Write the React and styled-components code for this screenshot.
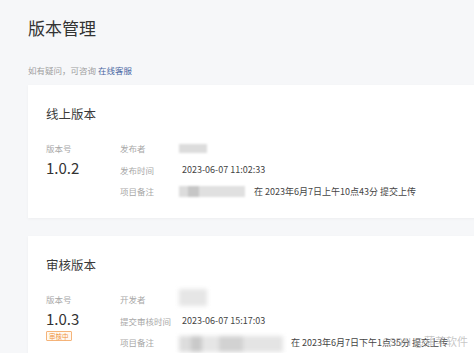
import React from "react";
import styled, { createGlobalStyle, css } from "styled-components";

const GlobalStyle = createGlobalStyle`
  html, body {
    margin: 0;
    padding: 0;
    background: #f6f7f9;
    overflow: hidden;
  }
  body {
    font-family: "Noto Sans CJK SC", "Noto Sans", sans-serif;
    color: #333;
  }
`;

const Page = styled.div`
  position: relative;
  width: 474px;
  height: 353px;
  padding: 17px 0 0 28px;
  box-sizing: border-box;
  overflow: hidden;
`;

const Title = styled.h1`
  margin: 0;
  font-size: 17px;
  font-weight: 400;
  line-height: 22px;
  color: #333;
`;

const Hint = styled.p`
  margin: 25px 0 0;
  font-size: 8.5px;
  line-height: 12px;
  color: #a0a0a0;

  a {
    color: #4a67a3;
    text-decoration: none;
  }
`;

const Card = styled.section`
  background: #fff;
  margin-top: ${({ $gap }) => $gap}px;
  margin-right: -60px;
  padding: 20px 0 ${({ $bottom }) => $bottom}px 18px;
  box-shadow: 0 1px 3px rgba(0, 0, 0, 0.04);
`;

const CardTitle = styled.h2`
  margin: 0;
  font-size: 12.5px;
  font-weight: 400;
  line-height: 18px;
  color: #3a3a3a;
`;

const Body = styled.div`
  display: flex;
  margin-top: 18px;
`;

const VersionCol = styled.div`
  width: 74px;
  display: flex;
  flex-direction: column;
  align-items: flex-start;
`;

const Small = styled.span`
  font-size: 8.5px;
  line-height: 14px;
  color: #a8a8a8;
`;

const Version = styled.div`
  font-size: 15px;
  line-height: 20px;
  margin-top: 3px;
  color: #333;
`;

const Badge = styled.span`
  margin-top: 2px;
  font-size: 6.5px;
  line-height: 8px;
  padding: 0 2px;
  color: #f0933f;
  border: 1px solid #f5b47a;
  border-radius: 1px;
  background: #fff8f0;
`;

const Rows = styled.div`
  display: grid;
  grid-template-columns: 62px auto;
  grid-auto-rows: 21.5px;
  align-items: center;
  margin-top: -3.5px;
`;

const Value = styled.div`
  display: flex;
  align-items: center;
  font-size: 9px;
  color: #444;
  white-space: nowrap;
`;

const Blur = styled.span`
  display: inline-block;
  width: ${({ $w }) => $w}px;
  height: ${({ $h }) => $h}px;
  margin: ${({ $dy = 0 }) => $dy}px 0 0 -3px;
  background: ${({ $bg }) => $bg};
  filter: blur(1px);
  ${({ $tall }) =>
    $tall &&
    css`
      filter: blur(2px);
    `}
`;

const Note = styled.span`
  margin-left: ${({ $ml }) => $ml}px;
`;

const Watermark = styled.span`
  position: absolute;
  right: 6px;
  bottom: 4px;
  font-size: 11px;
  color: rgba(150, 150, 150, 0.55);
`;

const grayA = "#dcdcdc";
const patchy1 =
  "linear-gradient(90deg, #dcdcdc 0 14%, #c6c6c6 14% 30%, #e0e0e0 30% 100%)";
const patchy2 =
  "linear-gradient(90deg, #dddddd 0 12%, #c9c9c9 12% 22%, #e6e6e6 22% 38%, #d2d2d2 38% 62%, #e4e4e4 62% 100%)";

const App = () => {
  return (
    <Page>
      <GlobalStyle />
      <Title>版本管理</Title>
      <Hint>
        如有疑问，可咨询 <a href="#">在线客服</a>
      </Hint>

      <Card $gap={9} $bottom={16}>
        <CardTitle>线上版本</CardTitle>
        <Body>
          <VersionCol>
            <Small>版本号</Small>
            <Version>1.0.2</Version>
          </VersionCol>
          <Rows>
            <Small>发布者</Small>
            <Value>
              <Blur $w={28} $h={9} $bg={grayA} />
            </Value>
            <Small>发布时间</Small>
            <Value>2023-06-07 11:02:33</Value>
            <Small>项目备注</Small>
            <Value>
              <Blur $w={66} $h={11} $bg={patchy1} />
              <Note $ml={9}>在 2023年6月7日上午10点43分 提交上传</Note>
            </Value>
          </Rows>
        </Body>
      </Card>

      <Card $gap={18} $bottom={16}>
        <CardTitle>审核版本</CardTitle>
        <Body>
          <VersionCol>
            <Small>版本号</Small>
            <Version>1.0.3</Version>
            <Badge>审核中</Badge>
          </VersionCol>
          <Rows>
            <Small>开发者</Small>
            <Value>
              <Blur $w={28} $h={17} $dy={-4} $bg="#e6e6e6" $tall />
            </Value>
            <Small>提交审核时间</Small>
            <Value>2023-06-07 15:17:03</Value>
            <Small>项目备注</Small>
            <Value>
              <Blur $w={104} $h={16} $dy={4} $bg={patchy2} $tall />
              <Note $ml={8}>在 2023年6月7日下午1点35分 提交上传</Note>
            </Value>
          </Rows>
        </Body>
      </Card>

      <Watermark>CSDN @蒲苇软件</Watermark>
    </Page>
  );
};

export default App;
